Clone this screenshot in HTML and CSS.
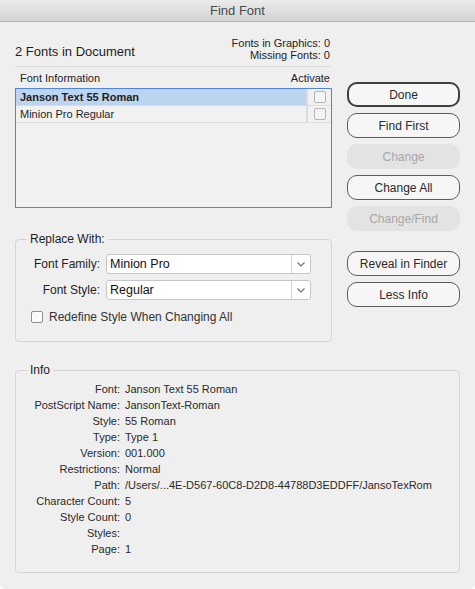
FILE: index.html
```html
<!DOCTYPE html>
<html lang="en">
  <head>
    <meta charset="UTF-8" />
    <title>Find Font</title>
    <link rel="stylesheet" href="styles.css">
  </head>
  <body>
    <div class="window">
      <div class="titlebar">Find Font</div>

      <div class="main">
        <div class="left">
          <div class="doc-head">
            <div class="doc-title">2 Fonts in Document</div>
            <div class="counts">
              <div>Fonts in Graphics: 0</div>
              <div>Missing Fonts: 0</div>
            </div>
          </div>

          <div class="list-head">
            <span>Font Information</span>
            <span>Activate</span>
          </div>
          <div class="list">
            <div class="row selected">
              <div class="name">Janson Text 55 Roman</div>
              <div class="act"><span class="box"></span></div>
            </div>
            <div class="row">
              <div class="name">Minion Pro Regular</div>
              <div class="act"><span class="box"></span></div>
            </div>
          </div>

          <fieldset class="group replace">
            <legend>Replace With:</legend>
            <div class="field">
              <label>Font Family:</label>
              <div class="select">
                <span class="value">Minion Pro</span>
                <span class="arrow">
                  <svg width="8" height="5" viewBox="0 0 8 5"><path d="M0.5 0.5 L4 4 L7.5 0.5" fill="none" stroke="#6f6f6f" stroke-width="1.1"/></svg>
                </span>
              </div>
            </div>
            <div class="field">
              <label>Font Style:</label>
              <div class="select">
                <span class="value">Regular</span>
                <span class="arrow">
                  <svg width="8" height="5" viewBox="0 0 8 5"><path d="M0.5 0.5 L4 4 L7.5 0.5" fill="none" stroke="#6f6f6f" stroke-width="1.1"/></svg>
                </span>
              </div>
            </div>
            <div class="check">
              <span class="box"></span>
              <span>Redefine Style When Changing All</span>
            </div>
          </fieldset>
        </div>

        <div class="buttons">
          <button class="btn default">Done</button>
          <button class="btn">Find First</button>
          <button class="btn" disabled>Change</button>
          <button class="btn">Change All</button>
          <button class="btn" disabled>Change/Find</button>
          <button class="btn spaced">Reveal in Finder</button>
          <button class="btn">Less Info</button>
        </div>
      </div>

      <fieldset class="group info">
        <legend>Info</legend>
        <div class="info-grid">
          <span class="k">Font:</span><span>Janson Text 55 Roman</span>
          <span class="k">PostScript Name:</span><span>JansonText-Roman</span>
          <span class="k">Style:</span><span>55 Roman</span>
          <span class="k">Type:</span><span>Type 1</span>
          <span class="k">Version:</span><span>001.000</span>
          <span class="k">Restrictions:</span><span>Normal</span>
          <span class="k">Path:</span><span>/Users/...4E-D567-60C8-D2D8-44788D3EDDFF/JansoTexRom</span>
          <span class="k">Character Count:</span><span>5</span>
          <span class="k">Style Count:</span><span>0</span>
          <span class="k">Styles:</span><span></span>
          <span class="k">Page:</span><span>1</span>
        </div>
      </fieldset>
    </div>
  </body>
</html>
```

FILE: styles.css
```css
body {
  margin: 0;
  background: #ffffff;
  font-family: "Liberation Sans", Arial, sans-serif;
  font-size: 11px;
  color: #1e1e1e;
}

.window {
  width: 475px;
  height: 589px;
  background: #efefef;
  border-radius: 0 0 5px 5px;
  overflow: hidden;
}

.titlebar {
  height: 21px;
  line-height: 22px;
  text-align: center;
  font-size: 13px;
  color: #4a4a4a;
  background: linear-gradient(#ebebeb, #d4d4d4);
  border-bottom: 1px solid #b3b3b3;
}

.main {
  display: flex;
  gap: 15px;
  padding: 0 15px;
}

.left {
  width: 317px;
}

.doc-head {
  display: flex;
  justify-content: space-between;
  align-items: flex-end;
  margin: 15px 2px 0 0;
  padding-bottom: 5px;
  border-bottom: 1px solid #d9d9d9;
}

.doc-title {
  font-size: 13px;
  line-height: 16px;
  margin-bottom: 1px;
}

.counts {
  text-align: right;
  line-height: 12px;
}

.list-head {
  display: flex;
  justify-content: space-between;
  line-height: 14px;
  margin-top: 4px;
  padding: 0 2px 0 5px;
}

.list {
  margin-top: 3px;
  height: 120px;
  box-sizing: border-box;
  border: 1px solid #4f86d6;
  background: #f1f1f1;
}

.row {
  display: flex;
  height: 16px;
  line-height: 16px;
  border-bottom: 1px solid #dcdcdc;
}

.row .name {
  flex: 1;
  padding-left: 4px;
}

.row.selected .name {
  background: #bcd4ee;
  font-weight: bold;
}

.row .act {
  width: 23px;
  border-left: 2px solid #dcdcdc;
  display: flex;
  align-items: center;
  justify-content: center;
}

.box {
  display: inline-block;
  width: 10px;
  height: 10px;
  border: 1px solid #b5b5b5;
  border-radius: 2px;
  background: #f4f4f4;
}

.group {
  margin: 0;
  border: 1px solid #d5d5d5;
  border-radius: 4px;
  min-width: 0;
}

.group legend {
  font-size: 12px;
  line-height: 14px;
  padding: 0 3px;
  margin-left: -3px;
}

.replace {
  margin-top: 24px;
  padding: 0 20px 17px 14px;
}

.field {
  display: flex;
  align-items: center;
  gap: 6px;
  margin-top: 8px;
}

.field + .field {
  margin-top: 6px;
}

.field label {
  width: 70px;
  text-align: right;
  font-size: 12px;
}

.select {
  flex: 1;
  display: flex;
  height: 18px;
  border: 1px solid #c6c6c6;
  border-radius: 3px;
  background: #ffffff;
}

.select .value {
  flex: 1;
  padding-left: 3px;
  font-size: 12.5px;
  line-height: 18px;
  color: #111;
}

.select .arrow {
  width: 18px;
  border-left: 1px solid #cfcfcf;
  display: flex;
  align-items: center;
  justify-content: center;
}

.check {
  display: flex;
  align-items: center;
  gap: 6px;
  margin-top: 10px;
  padding-left: 1px;
  font-size: 12px;
  line-height: 14px;
  color: #333;
}

.check .box {
  border-color: #8e8e8e;
  background: #fbfbfb;
}

.buttons {
  width: 113px;
  display: flex;
  flex-direction: column;
  gap: 6px;
  margin-top: 60px;
}

.btn {
  height: 25px;
  padding: 0;
  font-family: inherit;
  font-size: 12px;
  color: #2a2a2a;
  background: #f6f6f6;
  border: 1px solid #5c5c5c;
  border-radius: 10px;
}

.btn.default {
  border: 2px solid #3e3e3e;
}

.btn:disabled {
  background: #e3e3e3;
  border-color: #e3e3e3;
  color: #a8a8a8;
}

.btn.spaced {
  margin-top: 14px;
}

.info {
  margin: 21px 15px 0;
  padding: 4px 14px 15px 14px;
}

.info-grid {
  display: grid;
  grid-template-columns: 90px 1fr;
  column-gap: 5px;
  line-height: 16px;
  color: #2a2a2a;
}

.info-grid .k {
  text-align: right;
}
```
